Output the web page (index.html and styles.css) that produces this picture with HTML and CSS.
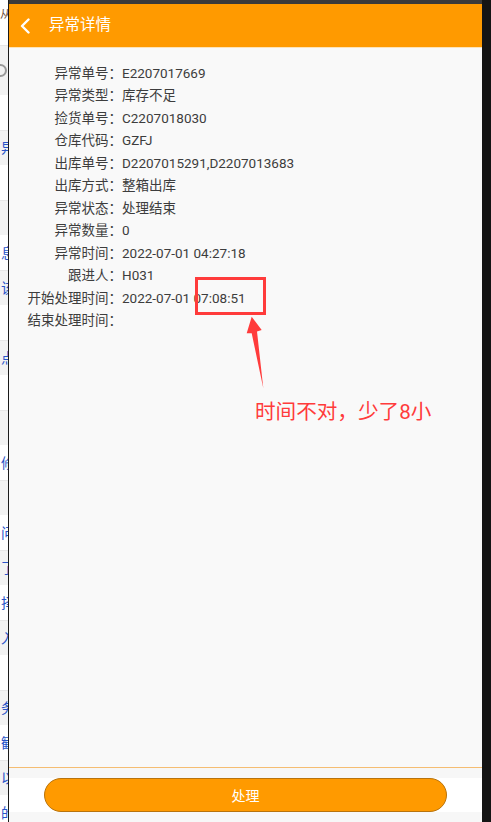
FILE: index.html
```html
<!DOCTYPE html>
<html lang="zh">
<head>
<meta charset="utf-8">
<title>异常详情</title>
<link rel="stylesheet" href="styles.css">
</head>
<body>
<div class="screen">
  <div class="behind">
    <div class="brow h45 white"><span class="g dark">从</span></div>
    <div class="brow h50 gray"><span class="search"></span></div>
    <div class="brow white"></div>
    <div class="brow gray"><span class="g">异</span></div>
    <div class="brow white"></div>
    <div class="brow gray"></div>
    <div class="brow white"><span class="g">息</span></div>
    <div class="brow gray"><span class="g">该</span></div>
    <div class="brow white"></div>
    <div class="brow gray"><span class="g">点</span></div>
    <div class="brow white"></div>
    <div class="brow gray"></div>
    <div class="brow white"><span class="g">修</span></div>
    <div class="brow gray"></div>
    <div class="brow white"><span class="g">问</span></div>
    <div class="brow gray"><span class="g">了</span></div>
    <div class="brow white"><span class="g">择</span></div>
    <div class="brow gray"><span class="g">入</span></div>
    <div class="brow white"></div>
    <div class="brow gray"><span class="g">务</span></div>
    <div class="brow white"><span class="g">勧</span></div>
    <div class="brow gray"><span class="g">以</span></div>
    <div class="brow white"><span class="g">的</span></div>
  </div>

  <div class="phone">
    <div class="status"></div>
    <header class="bar">
      <svg class="back" viewBox="0 0 10 16" width="10" height="16" aria-hidden="true">
        <polyline points="8.5,1.5 2,8 8.5,14.5" fill="none" stroke="#fff" stroke-width="2.4" stroke-linecap="round" stroke-linejoin="round"/>
      </svg>
      <h1 class="title">异常详情</h1>
    </header>

    <main class="content">
      <div class="info">
        <div class="label">异常单号：</div><div class="value">E2207017669</div>
        <div class="label">异常类型：</div><div class="value">库存不足</div>
        <div class="label">捡货单号：</div><div class="value">C2207018030</div>
        <div class="label">仓库代码：</div><div class="value">GZFJ</div>
        <div class="label">出库单号：</div><div class="value">D2207015291,D2207013683</div>
        <div class="label">出库方式：</div><div class="value">整箱出库</div>
        <div class="label">异常状态：</div><div class="value">处理结束</div>
        <div class="label">异常数量：</div><div class="value">0</div>
        <div class="label">异常时间：</div><div class="value">2022-07-01 04:27:18</div>
        <div class="label">跟进人：</div><div class="value">H031</div>
        <div class="label">开始处理时间：</div><div class="value">2022-07-01 07:08:51</div>
        <div class="label">结束处理时间：</div><div class="value"></div>
      </div>

      <div class="mark-box"></div>
      <svg class="mark-arrow" viewBox="0 0 473 719" width="473" height="719" aria-hidden="true">
        <polygon points="242.7,268.7 252.7,282 248,283.5 254.3,340.3 242.7,285.3 237.7,285.3" fill="#ff3b3b"/>
      </svg>
      <div class="mark-text">时间不对，少了8小</div>
    </main>

    <footer class="foot">
      <div class="foot-row">
        <button class="btn" type="button">处理</button>
      </div>
    </footer>
  </div>

  <div class="edge"></div>
</div>
</body>
</html>
```

FILE: styles.css
```css
html, body {
  margin: 0;
  padding: 0;
}

body {
  width: 491px;
  height: 822px;
  overflow: hidden;
  font-family: "Roboto", "Noto Sans CJK SC", sans-serif;
  background: #fff;
}

.screen {
  display: flex;
  width: 491px;
  height: 822px;
}

/* page behind the phone, mostly hidden */
.behind {
  width: 8px;
  flex: none;
  overflow: hidden;
  border-right: 1px solid #1a1a1a;
  display: flex;
  flex-direction: column;
}

.brow {
  height: 35px;
  flex: none;
  display: flex;
  align-items: center;
  justify-content: flex-end;
  overflow: hidden;
}

.brow.h45 { height: 45px; }
.brow.h50 { height: 50px; }
.brow.white { background: #ffffff; }
.brow.gray { background: #f2f2f2; border-top: 1px solid #e6e6e6; box-sizing: border-box; }

.g {
  font-size: 14px;
  color: #2a55c8;
  margin-right: -7px;
  flex: none;
  line-height: 1;
}

.g.dark {
  color: #6b4a3a;
  font-size: 11px;
  margin-right: -3px;
  align-self: flex-start;
  margin-top: 9px;
}

.search {
  width: 9px;
  height: 9px;
  border: 2px solid #9a9a9a;
  border-radius: 50%;
  margin-left: -6px;
  margin-right: auto;
  flex: none;
}

/* phone */
.phone {
  flex: 1;
  display: flex;
  flex-direction: column;
  background: #f9f9f9;
  min-width: 0;
}

.status {
  height: 4px;
  background: #3a3a3a;
  flex: none;
}

.bar {
  height: 44px;
  flex: none;
  background: #ff9a00;
  display: flex;
  align-items: center;
  padding-left: 11px;
  border-bottom: 1px solid #fde3b8;
  box-sizing: border-box;
}

.back {
  display: block;
  flex: none;
}

.title {
  margin: 0 0 0 19px;
  font-size: 15.5px;
  font-weight: normal;
  color: #ffffff;
  line-height: 1;
}

.content {
  flex: 1;
  position: relative;
  padding-top: 14px;
}

.info {
  display: grid;
  grid-template-columns: 113px 1fr;
  font-size: 13.5px;
  line-height: 22.45px;
  color: #3d3d3d;
}

.label {
  text-align: right;
  white-space: nowrap;
}

.value {
  white-space: nowrap;
  min-height: 22.45px;
}

/* annotation overlay */
.mark-box {
  position: absolute;
  left: 186px;
  top: 229px;
  width: 71px;
  height: 38px;
  border: 3px solid #ff3b3b;
  box-sizing: border-box;
}

.mark-arrow {
  position: absolute;
  left: 0;
  top: 0;
}

.mark-text {
  position: absolute;
  left: 246px;
  top: 350px;
  font-size: 20.6px;
  line-height: 28px;
  color: #ff3b3b;
  white-space: nowrap;
}

/* footer */
.foot {
  flex: none;
  border-top: 1px solid #f5bd72;
  background: #f7f7f7;
  padding: 10px 0;
}

.foot-row {
  background: #ffffff;
  height: 34px;
  display: flex;
  justify-content: center;
}

.btn {
  width: 403px;
  height: 34px;
  border-radius: 17px;
  border: 1px solid #b8730c;
  background: #ff9a00;
  color: #ffffff;
  font-family: "Roboto", "Noto Sans CJK SC", sans-serif;
  font-size: 14px;
  padding: 0;
  box-sizing: border-box;
}

.edge {
  width: 9px;
  flex: none;
  background: #141414;
}
```
